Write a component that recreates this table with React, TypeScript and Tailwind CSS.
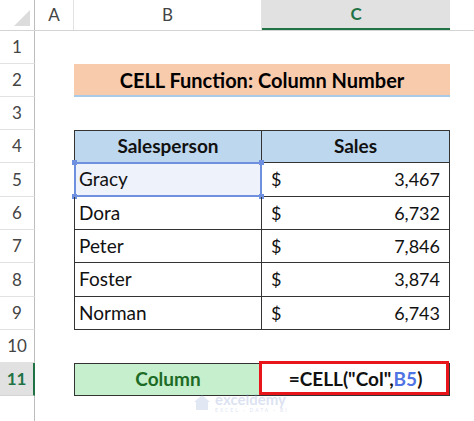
import React from "react";

type Row = { n: number; h: string };

const rows: Row[] = [
  { n: 1, h: "h-[33px]" },
  { n: 2, h: "h-[33px]" },
  { n: 3, h: "h-[33px]" },
  { n: 4, h: "h-[33px]" },
  { n: 5, h: "h-[34px]" },
  { n: 6, h: "h-[33px]" },
  { n: 7, h: "h-[33px]" },
  { n: 8, h: "h-[34px]" },
  { n: 9, h: "h-[33px]" },
  { n: 10, h: "h-[33px]" },
  { n: 11, h: "h-[33px]" },
];

const sales = [
  { name: "Gracy", amount: "3,467" },
  { name: "Dora", amount: "6,732" },
  { name: "Peter", amount: "7,846" },
  { name: "Foster", amount: "3,874" },
  { name: "Norman", amount: "6,743" },
];

const Handle = ({ pos }: { pos: string }) => (
  <span className={`absolute w-[5px] h-[5px] bg-[#6f8fdf] ${pos}`} />
);

function RowBody({ n }: { n: number }) {
  // row 2: title bar
  if (n === 2) {
    return (
      <div className="w-[376px] h-full bg-[#f8cbad] border-b-2 border-[#a9cbe8] flex items-center justify-center text-[20px] font-bold text-black">
        CELL Function: Column Number
      </div>
    );
  }
  // row 4: table header
  if (n === 4) {
    return (
      <div className="flex h-full">
        <div className="w-[188px] h-full bg-[#bdd7ee] border border-[#333] flex items-center justify-center text-[19px] font-bold">
          Salesperson
        </div>
        <div className="w-[188px] h-full bg-[#bdd7ee] border-y border-r border-[#333] flex items-center justify-center text-[19px] font-bold">
          Sales
        </div>
      </div>
    );
  }
  // rows 5-9: data
  if (n >= 5 && n <= 9) {
    const item = sales[n - 5];
    const selected = n === 5;
    return (
      <div className="flex h-full">
        <div
          className={`relative w-[188px] h-full border-l border-r border-b border-[#333] flex items-center pl-[4px] text-[19px] ${
            selected ? "bg-[#eef2fb]" : ""
          }`}
        >
          {item.name}
          {selected && (
            <>
              <span className="absolute -top-[1px] -left-[1px] -right-[1px] -bottom-[1px] border-2 border-[#6f8fdf]" />
              <Handle pos="-top-[3px] -left-[3px]" />
              <Handle pos="-top-[3px] -right-[3px]" />
              <Handle pos="-bottom-[3px] -left-[3px]" />
              <Handle pos="-bottom-[3px] -right-[3px]" />
            </>
          )}
        </div>
        <div className="w-[188px] h-full border-r border-b border-[#333] flex items-center justify-between pl-[9px] pr-[9px] text-[18px]">
          <span>$</span>
          <span>{item.amount}</span>
        </div>
      </div>
    );
  }
  // row 11: result
  if (n === 11) {
    return (
      <div className="flex h-full">
        <div className="w-[188px] h-full bg-[#c6efce] border border-[#333] flex items-center justify-center text-[19px] font-bold text-[#1d6b25]">
          Column
        </div>
        <div className="relative w-[188px] h-full border-y border-r border-[#333] flex items-center justify-center text-[19px] font-bold">
          <span className="absolute -top-[3px] -left-[3px] right-0 bottom-0 border-[3px] border-[#e8161b]" />
          <span>
            =CELL("Col",<span className="text-[#4f73e3]">B5</span>)
          </span>
        </div>
      </div>
    );
  }
  return null;
}

export default function App() {
  return (
    <div className="relative w-[474px] h-[421px] overflow-hidden bg-white font-['Lato',sans-serif] text-[#111]">
      {/* column headers */}
      <div className="flex h-[31px] border-b border-[#d4d4d4]">
        <div className="relative w-[35px] h-full border-r border-[#bdbdbd]">
          <span className="absolute right-[4px] bottom-[4px] w-0 h-0 [border-bottom:16px_solid_#dcdcdc] [border-left:16px_solid_transparent]" />
        </div>
        <div className="w-[39px] h-full border-r border-[#e2e2e2] flex items-center justify-center text-[17px] text-[#444]">
          A
        </div>
        <div className="w-[188px] h-full border-r border-[#e2e2e2] flex items-center justify-center text-[17px] text-[#444]">
          B
        </div>
        <div className="w-[188px] h-full bg-[#e1e1e1] border-b-2 border-[#217346] flex items-center justify-center text-[17px] font-bold text-[#217346]">
          C
        </div>
        <div className="flex-1 h-full" />
      </div>

      {/* rows */}
      {rows.map((r) => (
        <div key={r.n} className={`flex ${r.h}`}>
          <div
            className={`w-[35px] shrink-0 h-full border-r border-b flex items-center justify-center text-[17px] ${
              r.n === 11
                ? "bg-[#e1e1e1] border-r-2 border-r-[#217346] border-b-[#d4d4d4] font-bold text-[#217346]"
                : "border-r-[#bdbdbd] border-b-[#e2e2e2] text-[#444]"
            }`}
          >
            {r.n}
          </div>
          <div className="w-[39px] shrink-0 h-full" />
          <RowBody n={r.n} />
        </div>
      ))}
      {/* remaining row, no visible label */}
      <div className="flex h-[30px]">
        <div className="w-[35px] h-full border-r border-[#bdbdbd]" />
      </div>

      {/* watermark */}
      <div className="absolute left-[193px] top-[393px] flex items-center gap-[4px] opacity-30 pointer-events-none">
        <svg width="18" height="18" viewBox="0 0 18 18">
          <path d="M9 1 L17 8 L15 8 L15 16 L3 16 L3 8 L1 8 Z" fill="#9fb2d8" />
        </svg>
        <div className="flex flex-col gap-[2px] leading-none">
          <span className="text-[15px] leading-[13px] font-bold text-[#8ea3d3]">exceldemy</span>
          <span className="text-[5px] leading-[5px] tracking-[2px] text-[#8ea3d3]">EXCEL · DATA · BI</span>
        </div>
      </div>
    </div>
  );
}
